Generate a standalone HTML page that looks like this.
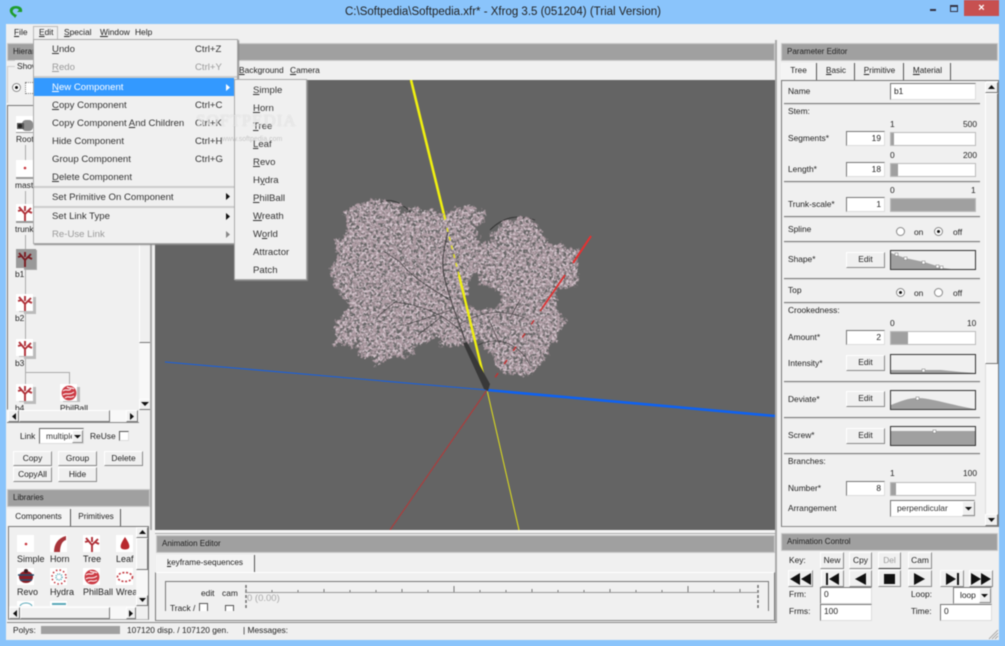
<!DOCTYPE html>
<html><head><meta charset="utf-8"><title>Xfrog</title>
<style>
html,body{margin:0;padding:0;background:#8ac4fb}
#r{position:relative;width:1005px;height:646px;overflow:hidden;background:#8ac4fb;font-family:"Liberation Sans",sans-serif;font-size:8.4px;color:#222;filter:blur(.4px)}
#r div,#r svg.a{position:absolute;box-sizing:border-box}
.t{white-space:nowrap;line-height:12px;height:12px}
.u{text-decoration:underline}
.tb{background:#a0a0a0;border:1px solid #ccc;line-height:16px;padding-left:5px;font-size:8px;color:#222}
.b{background:#f0f0f0;border:1px solid;border-color:#fff #8a8a8a #8a8a8a #fff;text-align:center;line-height:12px;font-size:8.4px}
.i{background:#fff;border:1px solid;border-color:#777 #ddd #ddd #777;line-height:12px;padding:0 3px;font-size:8.4px}
.s{background:#fff;border:1px solid #bbb}
.f{background:#a0a0a0;top:0;left:0;bottom:0}
.g{background:#f0f0f0;border:1px solid #333;overflow:hidden}
.sep{left:784px;width:196px;background:#777;border-bottom:1px solid #ddd;height:2px}
.m{font-size:9.6px;color:#333;margin-top:1px}
.dis{color:#9a9a9a}
.rad{width:9px;height:9px;border-radius:50%;background:#fff;border:1px solid #888}
.rad.on::after{content:"";position:absolute;left:2px;top:2px;width:3px;height:3px;border-radius:50%;background:#111}
.sb{background:#f0f0f0;border:1px solid;border-color:#fff #777 #777 #fff}
.tab{background:#f0f0f0;border-right:1px solid #555;text-align:center;line-height:15px;font-size:8.2px}
.ic{background:#fff;width:17px;height:17px}
.sh{box-shadow:3px 3px 0 #bbb}
</style></head><body>
<div id="r">
<svg width="0" height="0" style="position:absolute">
<defs>
<symbol id="tree" viewBox="0 0 18 18"><path d="M9 17V9M9 10L3 3M9 10L15 4M6 6L2 7M12 7L16 9M9 7V2" fill="none" stroke="#b03038" stroke-width="1.9"/></symbol>
<symbol id="tree2" viewBox="0 0 18 18"><path d="M9 17V9M9 10L3 3M9 10L15 4M6 6L2 7M12 7L16 9M9 7V2" fill="none" stroke="#7a1c22" stroke-width="1.9"/></symbol>
<symbol id="dot" viewBox="0 0 18 18"><circle cx="9" cy="9" r="1.3" fill="#c8323a"/></symbol>
<symbol id="horn" viewBox="0 0 18 18"><path d="M4 17C4 9 8 3 16 1L16 5C12 6 10 11 10 17Z" fill="#a8343a"/></symbol>
<symbol id="leaf" viewBox="0 0 18 18"><path d="M9 2C5 8 4 11 5 13C6 15 12 15 13 13C14 11 13 8 9 2Z" fill="#b8282e"/></symbol>
<symbol id="revo" viewBox="0 0 18 18"><ellipse cx="9" cy="9" rx="7" ry="6" fill="#8c1e26"/><path d="M1 7H17M3 12H15" stroke="#255070" stroke-width="1.5"/><circle cx="9" cy="3" r="2" fill="#3a1a20"/></symbol>
<symbol id="hydra" viewBox="0 0 18 18"><circle cx="9" cy="9" r="7" fill="none" stroke="#c43a42" stroke-width="1.6" stroke-dasharray="1.5 2.2"/><circle cx="9" cy="9" r="3" fill="none" stroke="#5aa8b8" stroke-width="1.6" stroke-dasharray="1 1"/></symbol>
<symbol id="phil" viewBox="0 0 18 18"><circle cx="9" cy="9" r="7.4" fill="#cc3a44"/><path d="M3 7C6 4 8 8 11 5M3 11C6 8 9 12 14 8M5 14C8 11 10 15 14 12M7 3C9 5 12 3 14 5" fill="none" stroke="#fff" stroke-width="1"/></symbol>
<symbol id="wreath" viewBox="0 0 18 18"><ellipse cx="9" cy="9" rx="7.5" ry="4.5" fill="none" stroke="#c43a42" stroke-width="1.6" stroke-dasharray="2 1.7"/></symbol>
<filter id="pet" x="-12%" y="-12%" width="124%" height="124%" color-interpolation-filters="sRGB">
<feTurbulence type="fractalNoise" baseFrequency=".11" numOctaves="3" seed="7" result="d"/>
<feDisplacementMap in="SourceAlpha" in2="d" scale="22" xChannelSelector="R" yChannelSelector="G"/>
<feGaussianBlur stdDeviation="2.2" result="a"/>
<feTurbulence type="fractalNoise" baseFrequency=".3" numOctaves="2" seed="4"/>
<feColorMatrix values="0 0 0 0 0 0 0 0 0 0 0 0 0 0 0 1 0 0 0 0" result="n"/>
<feComposite in="a" in2="n" operator="arithmetic" k2=".5" k3=".5"/>
<feComponentTransfer result="m"><feFuncA type="linear" slope="10" intercept="-6.8"/></feComponentTransfer>
<feFlood flood-color="#aa979f"/>
<feComposite in2="m" operator="in"/>
<feGaussianBlur stdDeviation=".3"/>
</filter>
<filter id="pet2" x="-12%" y="-12%" width="124%" height="124%" color-interpolation-filters="sRGB">
<feTurbulence type="fractalNoise" baseFrequency=".11" numOctaves="3" seed="7" result="d"/>
<feDisplacementMap in="SourceAlpha" in2="d" scale="22" xChannelSelector="R" yChannelSelector="G"/>
<feGaussianBlur stdDeviation="2.2" result="a"/>
<feTurbulence type="fractalNoise" baseFrequency=".42" numOctaves="2" seed="21"/>
<feColorMatrix values="0 0 0 0 0 0 0 0 0 0 0 0 0 0 0 1 0 0 0 0" result="n"/>
<feComposite in="a" in2="n" operator="arithmetic" k2=".5" k3=".5"/>
<feComponentTransfer result="m"><feFuncA type="linear" slope="10" intercept="-7.35"/></feComponentTransfer>
<feFlood flood-color="#d2c4cc"/>
<feComposite in2="m" operator="in"/>
<feGaussianBlur stdDeviation=".3"/>
</filter>
</defs></svg>

<!-- title bar -->
<svg class="a" style="left:8px;top:5px" width="16" height="14" viewBox="0 0 16 14"><path d="M8 1C3 1 1 4 2 7C3 10 6 11 7 13L9 10C6 9 4 7 5 5C6 3 10 3 11 5L9 7L14 7C15 3 12 1 8 1Z" fill="#1f9d2d"/></svg>
<div class="t" style="left:345px;top:5px;font-size:11.5px;line-height:14px;height:14px;color:#222">C:\Softpedia\Softpedia.xfr* - Xfrog 3.5 (051204) (Trial Version)</div>
<div style="left:930px;top:9px;width:6px;height:2px;background:#334"></div>
<div style="left:950px;top:5px;width:8px;height:7px;border:1px solid #334;border-top-width:2px"></div>
<div style="left:964px;top:0;width:35px;height:16px;background:#c75050;color:#fff;text-align:center;font-size:11px;line-height:16px;font-weight:bold">×</div>

<!-- client -->
<div style="left:6px;top:24px;width:993px;height:616px;background:#f0f0f0"></div>

<!-- menu bar -->
<div class="t" style="left:14px;top:26px"><span class="u">F</span>ile</div>
<div class="t" style="left:39px;top:26px"><span class="u">E</span>dit</div>
<div class="t" style="left:64px;top:26px"><span class="u">S</span>pecial</div>
<div class="t" style="left:100px;top:26px"><span class="u">W</span>indow</div>
<div class="t" style="left:135px;top:26px">Help</div>
<div style="left:33px;top:26px;width:25px;height:14px;border:1px solid #bbb;border-bottom:0"></div>

<!-- left panel -->
<div class="tb" style="left:7px;top:43px;width:143px;height:18px">Hierarchy</div>
<div style="left:7px;top:66px;width:143px;height:37px;border:1px solid #ccc;border-bottom:0"></div>
<div class="t" style="left:15px;top:60px;background:#f0f0f0;padding:0 2px">Show</div>
<div class="rad on" style="left:12px;top:83px"></div>
<div style="left:25px;top:82px;width:12px;height:12px;border:1px dotted #777;background:#fff"></div>
<div style="left:7px;top:105px;width:132px;height:305px;background:#f0f0f0;border:1px solid;border-color:#777 #f0f0f0 #f0f0f0 #777"></div>

<div style="left:25px;top:135px;width:1px;height:260px;background:#aaa"></div>
<div style="left:25px;top:372px;width:45px;height:1px;background:#aaa"></div>
<div style="left:69px;top:372px;width:1px;height:12px;background:#aaa"></div>

<div class="ic" style="left:16px;top:116px"></div>
<svg class="a" style="left:16px;top:116px" width="18" height="18" viewBox="0 0 18 18"><rect x="6" y="4" width="11" height="11" rx="4" fill="#8c8c8c"/><rect x="1" y="7" width="7" height="6" fill="#555"/><circle cx="4" cy="10" r="2" fill="#222"/></svg>
<div style="left:16px;top:132px;width:18px;height:2px;background:#999"></div>
<div class="t" style="left:16px;top:133px;background:#f0f0f0">Root</div>

<div class="ic" style="left:16px;top:160px"></div><svg class="a" style="left:16px;top:159px" width="18" height="18"><use href="#dot"/></svg>
<div style="left:16px;top:177px;width:18px;height:2px;background:#999"></div>
<div class="t" style="left:15px;top:179px;background:#f0f0f0">mast</div>

<div class="ic" style="left:16px;top:204px"></div><svg class="a" style="left:16px;top:204px" width="18" height="18"><use href="#tree"/></svg>
<div style="left:16px;top:221px;width:18px;height:2px;background:#999"></div>
<div class="t" style="left:15px;top:223px;background:#f0f0f0">trunk</div>

<div style="left:16px;top:249px;width:20px;height:20px;background:#999;box-shadow:1px 1px 0 #aaa"></div><svg class="a" style="left:16px;top:250px" width="18" height="18"><use href="#tree2"/></svg>
<div class="t" style="left:15px;top:268px;background:#f0f0f0">b1</div>

<div class="ic sh" style="left:16px;top:294px"></div><svg class="a" style="left:16px;top:294px" width="18" height="18"><use href="#tree"/></svg>
<div class="t" style="left:15px;top:312px;background:#f0f0f0">b2</div>

<div class="ic sh" style="left:16px;top:339px"></div><svg class="a" style="left:16px;top:339px" width="18" height="18"><use href="#tree"/></svg>
<div class="t" style="left:15px;top:357px;background:#f0f0f0">b3</div>

<div class="ic sh" style="left:16px;top:384px"></div><svg class="a" style="left:16px;top:384px" width="18" height="18"><use href="#tree"/></svg>
<div class="ic sh" style="left:60px;top:384px"></div><svg class="a" style="left:60px;top:384px" width="18" height="18"><use href="#phil"/></svg>
<div class="t" style="left:15px;top:402px;background:#f0f0f0">b4</div>
<div class="t" style="left:60px;top:402px;background:#f0f0f0">PhilBall</div>

<!-- hierarchy scrollbars -->
<div style="left:139px;top:105px;width:12px;height:305px;background:#f8f8f8"></div>
<div class="sb" style="left:139px;top:105px;width:12px;height:238px"></div>
<div class="sb" style="left:139px;top:399px;width:12px;height:11px"></div>
<svg class="a" style="left:141px;top:402px" width="8" height="5"><path d="M0 0H8L4 4Z" fill="#111"/></svg>
<div style="left:7px;top:410px;width:132px;height:13px;background:#f8f8f8;border-bottom:1px solid #888"></div>
<div class="sb" style="left:8px;top:410px;width:11px;height:12px"></div>
<svg class="a" style="left:11px;top:413px" width="5" height="8"><path d="M5 0V7L1 3.5Z" fill="#111"/></svg>
<div class="sb" style="left:19px;top:410px;width:91px;height:12px"></div>
<div class="sb" style="left:126px;top:410px;width:12px;height:12px"></div>
<svg class="a" style="left:130px;top:413px" width="5" height="8"><path d="M0 0V7L4 3.5Z" fill="#111"/></svg>

<div class="t" style="left:20px;top:430px">Link</div>
<div class="i" style="left:39px;top:428px;width:45px;height:16px;padding-left:6px;line-height:14px;color:#333;border-color:#666 #ddd #ddd #666;overflow:hidden">multiple</div>
<div class="b" style="left:72px;top:430px;width:11px;height:13px"></div>
<svg class="a" style="left:74px;top:435px" width="8" height="5"><path d="M0 0H7L3.5 3.5Z" fill="#111"/></svg>
<div class="t" style="left:90px;top:430px">ReUse</div>
<div style="left:119px;top:431px;width:10px;height:10px;background:#fff;border:1px solid;border-color:#555 #ddd #ddd #555"></div>

<div class="b" style="left:13px;top:451px;width:39px;height:15px">Copy</div>
<div class="b" style="left:58px;top:451px;width:39px;height:15px">Group</div>
<div class="b" style="left:104px;top:451px;width:39px;height:15px">Delete</div>
<div class="b" style="left:13px;top:467px;width:39px;height:15px">CopyAll</div>
<div class="b" style="left:58px;top:467px;width:39px;height:15px">Hide</div>

<div class="tb" style="left:7px;top:489px;width:143px;height:18px">Libraries</div>
<div class="tab" style="left:7px;top:509px;width:64px;height:17px;background:#f4f4f4">Components</div>
<div class="tab" style="left:72px;top:509px;width:49px;height:17px">Primitives</div>
<div style="left:8px;top:526px;width:141px;height:94px;border:1px solid;border-color:#777 #777 #bbb #777"></div>
<div style="left:9px;top:527px;width:127px;height:79px;background:#f0f0f0;overflow:hidden">
 <div class="ic" style="left:8px;top:8px"></div><svg class="a" style="left:8px;top:8px" width="18" height="18"><use href="#dot"/></svg>
 <div class="ic" style="left:41px;top:8px"></div><svg class="a" style="left:41px;top:8px" width="18" height="18"><use href="#horn"/></svg>
 <div class="ic" style="left:74px;top:8px"></div><svg class="a" style="left:74px;top:8px" width="18" height="18"><use href="#tree"/></svg>
 <div class="ic" style="left:107px;top:8px"></div><svg class="a" style="left:107px;top:8px" width="18" height="18"><use href="#leaf"/></svg>
 <div class="ic" style="left:8px;top:41px"></div><svg class="a" style="left:8px;top:41px" width="18" height="18"><use href="#revo"/></svg>
 <div class="ic" style="left:41px;top:41px"></div><svg class="a" style="left:41px;top:41px" width="18" height="18"><use href="#hydra"/></svg>
 <div class="ic" style="left:74px;top:41px"></div><svg class="a" style="left:74px;top:41px" width="18" height="18"><use href="#phil"/></svg>
 <div class="ic" style="left:107px;top:41px"></div><svg class="a" style="left:107px;top:41px" width="18" height="18"><use href="#wreath"/></svg>
 <div class="t" style="left:8px;top:26px;font-size:9px">Simple</div>
 <div class="t" style="left:41px;top:26px;font-size:9px">Horn</div>
 <div class="t" style="left:74px;top:26px;font-size:9px">Tree</div>
 <div class="t" style="left:107px;top:26px;font-size:9px">Leaf</div>
 <div class="t" style="left:8px;top:59px;font-size:9px">Revo</div>
 <div class="t" style="left:41px;top:59px;font-size:9px">Hydra</div>
 <div class="t" style="left:74px;top:59px;font-size:9px">PhilBall</div>
 <div class="t" style="left:107px;top:59px;font-size:9px">Wrea</div>
 <div class="ic" style="left:8px;top:74px;height:5px"></div>
 <div class="ic" style="left:41px;top:74px;height:5px"></div>
 <svg class="a" style="left:8px;top:74px" width="18" height="5"><path d="M3 5C5 1 13 1 15 5" fill="none" stroke="#5aa8b8"/></svg>
 <svg class="a" style="left:41px;top:74px" width="18" height="5"><path d="M2 3H16" stroke="#5aa8b8" stroke-width="2"/></svg>
</div>
<div style="left:136px;top:527px;width:12px;height:79px;background:#f8f8f8"></div>
<div class="sb" style="left:136px;top:527px;width:12px;height:11px"></div>
<svg class="a" style="left:139px;top:530px" width="8" height="5"><path d="M0 4H7L3.5 0Z" fill="#111"/></svg>
<div class="sb" style="left:136px;top:538px;width:12px;height:32px"></div>
<div class="sb" style="left:136px;top:595px;width:12px;height:11px"></div>
<svg class="a" style="left:139px;top:598px" width="8" height="5"><path d="M0 0H7L3.5 4Z" fill="#111"/></svg>
<div style="left:9px;top:606px;width:127px;height:14px;background:#f8f8f8;border-bottom:1px solid #aaa"></div>
<div class="sb" style="left:9px;top:607px;width:11px;height:12px"></div>
<svg class="a" style="left:12px;top:610px" width="5" height="8"><path d="M5 0V7L1 3.5Z" fill="#111"/></svg>
<div class="sb" style="left:20px;top:607px;width:90px;height:12px"></div>
<div class="sb" style="left:126px;top:607px;width:10px;height:12px"></div>
<svg class="a" style="left:129px;top:610px" width="5" height="8"><path d="M0 0V7L4 3.5Z" fill="#111"/></svg>

<!-- center top -->
<div class="tb" style="left:155px;top:43px;width:620px;height:18px"></div>
<div class="t" style="left:239px;top:64px;font-size:8.4px"><span class="u">B</span>ackground</div>
<div class="t" style="left:290px;top:64px;font-size:8.4px"><span class="u">C</span>amera</div>
<div style="left:150px;top:106px;width:2px;height:424px;background:#aaa"></div>

<!-- viewport -->
<svg class="a" style="left:155px;top:80px" width="620" height="450" viewBox="155 80 620 450">
<rect x="155" y="80" width="620" height="450" fill="#646464"/>
<path d="M487 390L519 530" stroke="#d8d820" stroke-width="1.1"/>
<path d="M487 390L390 530" stroke="#b03a3a" stroke-width="1.1"/>
<path d="M165 362L487 390" stroke="#1860e0" stroke-width="1.1"/>
<path d="M487 390L775 416" stroke="#0f62f0" stroke-width="2.6"/>
<path d="M411 80L446 223" stroke="#f0f010" stroke-width="2.6"/>
<path d="M380 203C392 196 405 205 415 217M490 230C505 215 520 215 535 220" fill="none" stroke="#333" stroke-width=".9"/>
<path fill-rule="evenodd" fill="#000" filter="url(#pet)" d="M345 208L380 194L407 206L447 208L464 199L494 212L478 232L486 238L500 218L530 212L550 238L582 248L580 288L560 292L558 310L570 318L558 338L545 364L528 382L500 378L492 358L476 342L445 352L435 342L415 352L382 366L360 362L356 346L332 350L329 322L345 308L340 297L328 278L332 245L342 228Z M472 282L494 291L498 306L474 305L466 298Z"/>
<path fill-rule="evenodd" fill="#000" filter="url(#pet2)" d="M345 208L380 194L407 206L447 208L464 199L494 212L478 232L486 238L500 218L530 212L550 238L582 248L580 288L560 292L558 310L570 318L558 338L545 364L528 382L500 378L492 358L476 342L445 352L435 342L415 352L382 366L360 362L356 346L332 350L329 322L345 308L340 297L328 278L332 245L342 228Z M472 282L494 291L498 306L474 305L466 298Z"/>
<g fill="none" stroke="#2c2c2c" opacity=".7">
<path d="M465 340C458 320 450 300 445 280C440 260 445 245 448 232" stroke-width="1.3"/>
<path d="M460 330C440 312 420 305 395 302M450 300C425 285 410 275 400 262M458 325C480 312 500 308 525 318M478 345C500 335 520 345 530 365M440 318L418 335M452 310L405 325M490 322L500 345M510 318L520 300M395 302L378 316M400 262L385 252" stroke-width=".8"/>
</g>
<path d="M447 228L459 275" stroke="#e8e820" stroke-width="1.4" stroke-dasharray="4 5"/>
<path d="M459 275L484 378" stroke="#f0f010" stroke-width="2.4"/>
<path d="M591 236L573 263" stroke="#e83030" stroke-width="2"/>
<path d="M565 275L543 307" stroke="#e03030" stroke-width="1.7"/>
<path d="M543 307L492 382" stroke="#c83030" stroke-width="1.4" stroke-dasharray="5 11"/>
<path d="M463 343L467 342L490 384L488 391L484 389Z" fill="#383838"/>
</svg>

<!-- animation editor -->
<div style="left:155px;top:530px;width:620px;height:4px;background:#f4f4f4;border-bottom:1px solid #aaa"></div>
<div class="tb" style="left:156px;top:535px;width:619px;height:18px">Animation Editor</div>
<div class="tab" style="left:156px;top:555px;width:99px;height:17px;line-height:15px;background:#f4f4f4"><span class="u">k</span>eyframe-sequences</div>
<div style="left:155px;top:572px;width:620px;height:49px;border-left:1px solid #777;border-right:1px solid #777;border-bottom:1px solid #888;border-top:1px solid #fff"></div>
<div style="left:165px;top:581px;width:604px;height:30px;border:1px solid #777;border-bottom:0"></div>
<div class="t" style="left:201px;top:587px">edit</div>
<div class="t" style="left:222px;top:587px">cam</div>
<div class="t" style="left:170px;top:602px">Track /</div>
<div style="left:199px;top:603px;width:9px;height:8px;border:1px solid #555;border-bottom:0;background:#fff"></div>
<div style="left:225px;top:605px;width:9px;height:6px;border:1px solid #555;border-bottom:0;background:#fff"></div>
<svg class="a" style="left:245px;top:584px" width="516" height="26"><path d="M1 1V25M513 1V25" stroke="#666" stroke-dasharray="3 2" stroke-width="1.4"/><path d="M1 8.5H513" stroke="#999"/><path d="M1 8V5M27 8V6M53 8V6M79 8V5M105 8V6M131 8V6M157 8V5M183 8V6M209 8V2M235 8V6M261 8V6M287 8V5M313 8V6M339 8V6M365 8V5M391 8V6M417 8V6M443 8V2M469 8V6M495 8V5" stroke="#777"/></svg>
<div class="t" style="left:247px;top:593px;color:#aaa;font-size:9.5px">0 (0.00)</div>

<!-- parameter editor -->
<div style="left:775px;top:40px;width:5px;height:583px;background:#f0f0f0;border-left:2px solid #aaa"></div>
<div class="tb" style="left:781px;top:43px;width:217px;height:18px">Parameter Editor</div>
<div class="tab" style="left:781px;top:63px;width:36px;height:17px;background:#f4f4f4">Tree</div>
<div class="tab" style="left:818px;top:63px;width:37px;height:17px"><span class="u">B</span>asic</div>
<div class="tab" style="left:856px;top:63px;width:48px;height:17px"><span class="u">P</span>rimitive</div>
<div class="tab" style="left:905px;top:63px;width:46px;height:17px"><span class="u">M</span>aterial</div>
<div style="left:781px;top:80px;width:218px;height:447px;border:1px solid;border-color:#777 #777 #888 #777"></div>

<div class="t" style="left:788px;top:85px">Name</div>
<div class="i" style="left:890px;top:83px;width:86px;height:17px;line-height:14px">b1</div>
<div class="sep" style="top:103px"></div>
<div class="t" style="left:788px;top:105px">Stem:</div>
<div class="t" style="left:890px;top:118px">1</div><div class="t" style="left:963px;top:118px">500</div>
<div class="t" style="left:788px;top:132px">Segments*</div>
<div class="i" style="left:846px;top:131px;width:39px;height:15px;text-align:right">19</div>
<div class="s" style="left:890px;top:132px;width:86px;height:14px"><div class="f" style="width:3px"></div></div>
<div class="t" style="left:890px;top:149px">0</div><div class="t" style="left:963px;top:149px">200</div>
<div class="t" style="left:788px;top:163px">Length*</div>
<div class="i" style="left:846px;top:162px;width:39px;height:15px;text-align:right">18</div>
<div class="s" style="left:890px;top:163px;width:86px;height:14px"><div class="f" style="width:7px"></div></div>
<div class="sep" style="top:181px"></div>
<div class="t" style="left:890px;top:184px">0</div><div class="t" style="left:971px;top:184px">1</div>
<div class="t" style="left:788px;top:198px">Trunk-scale*</div>
<div class="i" style="left:846px;top:197px;width:39px;height:15px;text-align:right">1</div>
<div class="s" style="left:890px;top:198px;width:86px;height:14px;background:#a0a0a0"></div>
<div class="sep" style="top:216px"></div>
<div class="t" style="left:788px;top:223px">Spline</div>
<div class="rad" style="left:896px;top:227px"></div><div class="t" style="left:914px;top:226px">on</div>
<div class="rad on" style="left:934px;top:227px"></div><div class="t" style="left:953px;top:226px">off</div>
<div class="sep" style="top:241px"></div>
<div class="t" style="left:788px;top:253px">Shape*</div>
<div class="b" style="left:846px;top:252px;width:39px;height:16px">Edit</div>
<div class="g" style="left:890px;top:250px;width:86px;height:20px"><svg class="a" style="left:0;top:0" width="84" height="18"><path d="M0 18V2L14 7L33 11L46 15L52 17L60 18Z" fill="#a0a0a0"/><g fill="#fff" stroke="#888" stroke-width=".6"><rect x="4" y="2" width="3" height="3"/><rect x="13" y="6" width="3" height="3"/><rect x="31" y="10" width="3" height="3"/><rect x="45" y="14" width="3" height="3"/><rect x="49" y="15" width="3" height="3"/></g></svg></div>
<div class="sep" style="top:278px"></div>
<div class="t" style="left:788px;top:284px">Top</div>
<div class="rad on" style="left:896px;top:288px"></div><div class="t" style="left:914px;top:287px">on</div>
<div class="rad" style="left:934px;top:288px"></div><div class="t" style="left:953px;top:287px">off</div>
<div class="sep" style="top:302px"></div>
<div class="t" style="left:788px;top:304px">Crookedness:</div>
<div class="t" style="left:890px;top:317px">0</div><div class="t" style="left:967px;top:317px">10</div>
<div class="t" style="left:788px;top:331px">Amount*</div>
<div class="i" style="left:846px;top:330px;width:39px;height:15px;text-align:right">2</div>
<div class="s" style="left:890px;top:331px;width:86px;height:14px"><div class="f" style="width:17px"></div></div>
<div class="t" style="left:788px;top:357px">Intensity*</div>
<div class="b" style="left:846px;top:355px;width:39px;height:16px">Edit</div>
<div class="g" style="left:890px;top:354px;width:86px;height:20px"><svg class="a" style="left:0;top:0" width="84" height="18"><path d="M0 18V15H50L70 17L84 18Z" fill="#a0a0a0"/><rect x="31" y="14" width="3" height="3" fill="#fff" stroke="#888" stroke-width=".6"/></svg></div>
<div class="sep" style="top:381px"></div>
<div class="t" style="left:788px;top:393px">Deviate*</div>
<div class="b" style="left:846px;top:391px;width:39px;height:16px">Edit</div>
<div class="g" style="left:890px;top:390px;width:86px;height:20px"><svg class="a" style="left:0;top:0" width="84" height="18"><path d="M0 18V14C10 10 18 7 26 7C40 7 60 14 84 18Z" fill="#a0a0a0"/><rect x="25" y="6" width="3" height="3" fill="#fff" stroke="#888" stroke-width=".6"/></svg></div>
<div class="sep" style="top:417px"></div>
<div class="t" style="left:788px;top:429px">Screw*</div>
<div class="b" style="left:846px;top:428px;width:39px;height:16px">Edit</div>
<div class="g" style="left:890px;top:426px;width:86px;height:20px"><svg class="a" style="left:0;top:0" width="84" height="18"><rect y="4" width="84" height="14" fill="#a0a0a0"/><rect x="42" y="3" width="3" height="3" fill="#fff" stroke="#888" stroke-width=".6"/></svg></div>
<div class="sep" style="top:453px"></div>
<div class="t" style="left:788px;top:455px">Branches:</div>
<div class="t" style="left:890px;top:467px">1</div><div class="t" style="left:963px;top:467px">100</div>
<div class="t" style="left:788px;top:482px">Number*</div>
<div class="i" style="left:846px;top:481px;width:39px;height:15px;text-align:right">8</div>
<div class="s" style="left:890px;top:482px;width:86px;height:14px"><div class="f" style="width:5px"></div></div>
<div class="t" style="left:788px;top:502px">Arrangement</div>
<div class="i" style="left:890px;top:500px;width:85px;height:17px;line-height:14px;padding-left:6px;color:#333">perpendicular</div>
<div class="b" style="left:962px;top:501px;width:13px;height:15px"></div>
<svg class="a" style="left:965px;top:507px" width="8" height="5"><path d="M0 0H7L3.5 3.5Z" fill="#111"/></svg>
<div style="left:985px;top:81px;width:13px;height:445px;background:#f8f8f8;border-left:1px solid #ddd"></div>
<div class="sb" style="left:985px;top:82px;width:13px;height:11px"></div>
<svg class="a" style="left:988px;top:85px" width="8" height="5"><path d="M0 4H7L3.5 0Z" fill="#111"/></svg>
<div class="sb" style="left:985px;top:93px;width:13px;height:271px"></div>
<div class="sb" style="left:985px;top:514px;width:13px;height:12px"></div>
<svg class="a" style="left:988px;top:518px" width="8" height="5"><path d="M0 0H7L3.5 4Z" fill="#111"/></svg>

<!-- animation control -->
<div class="tb" style="left:781px;top:533px;width:217px;height:18px">Animation Control</div>
<div class="t" style="left:789px;top:554px">Key:</div>
<div class="b" style="left:820px;top:552px;width:24px;height:17px;line-height:15px">New</div>
<div class="b" style="left:849px;top:552px;width:23px;height:17px;line-height:15px">Cpy</div>
<div class="b dis" style="left:878px;top:552px;width:23px;height:17px;line-height:15px;border-bottom-color:#333">Del</div>
<div class="b" style="left:908px;top:552px;width:24px;height:17px;line-height:15px">Cam</div>
<div class="b" style="left:788px;top:570px;width:25px;height:17px"></div>
<div class="b" style="left:821px;top:570px;width:23px;height:17px"></div>
<div class="b" style="left:849px;top:570px;width:23px;height:17px"></div>
<div class="b" style="left:878px;top:570px;width:23px;height:17px"></div>
<div class="b" style="left:908px;top:570px;width:24px;height:17px"></div>
<div class="b" style="left:940px;top:570px;width:24px;height:17px"></div>
<div class="b" style="left:969px;top:570px;width:24px;height:17px"></div>
<svg class="a" style="left:788px;top:570px" width="206" height="17" viewBox="788 570 206 17"><g fill="#111">
<path d="M800 573V585L790 579ZM811 573V585L801 579Z"/>
<path d="M826 573H828V585H826ZM839 573V585L829 579Z"/>
<path d="M866 573V585L855 579Z"/>
<rect x="884" y="574" width="11" height="10"/>
<path d="M914 573V585L925 579Z"/>
<path d="M946 573V585L956 579ZM957 573H959V585H957Z"/>
<path d="M971 573V585L981 579ZM981 573V585L991 579Z"/></g></svg>
<div class="t" style="left:789px;top:588px">Frm:</div>
<div class="i" style="left:820px;top:587px;width:52px;height:17px;line-height:13px">0</div>
<div class="t" style="left:911px;top:588px">Loop:</div>
<div class="i" style="left:953px;top:587px;width:39px;height:17px;line-height:14px;padding-left:6px">loop</div>
<div class="b" style="left:979px;top:588px;width:12px;height:15px"></div>
<svg class="a" style="left:981px;top:594px" width="8" height="5"><path d="M0 0H7L3.5 3.5Z" fill="#111"/></svg>
<div class="t" style="left:789px;top:605px">Frms:</div>
<div class="i" style="left:820px;top:604px;width:52px;height:17px;line-height:13px">100</div>
<div class="t" style="left:911px;top:605px">Time:</div>
<div class="i" style="left:940px;top:604px;width:52px;height:17px;line-height:13px">0</div>

<!-- status bar -->
<div style="left:7px;top:622px;width:770px;height:1px;background:#888"></div>
<div class="t" style="left:13px;top:624px">Polys:</div>
<div style="left:41px;top:626px;width:79px;height:8px;background:#a0a0a0"></div>
<div class="t" style="left:127px;top:624px">107120 disp. / 107120 gen.</div>
<div class="t" style="left:243px;top:624px">| Messages:</div>
<svg class="a" style="left:988px;top:629px" width="11" height="11"><path d="M1 10L10 1M4 10L10 4M7 10L10 7" stroke="#aaa"/></svg>

<!-- menu -->
<div style="left:33px;top:39px;width:205px;height:205px;background:#f0f0f0;border:1px solid #aaa;box-shadow:1px 1px 1px #888"></div>
<div style="left:34px;top:78px;width:200px;height:18px;background:#3399ff"></div>
<div style="left:34px;top:76px;width:203px;height:2px;background:#ccc"></div>
<div style="left:34px;top:186px;width:200px;height:2px;background:#ccc"></div>
<div style="left:34px;top:206px;width:200px;height:2px;background:#ccc"></div>
<div class="t m" style="left:52px;top:43px"><span class="u">U</span>ndo</div><div class="t m" style="left:195px;top:43px">Ctrl+Z</div>
<div class="t m dis" style="left:52px;top:61px"><span class="u">R</span>edo</div><div class="t m dis" style="left:195px;top:61px">Ctrl+Y</div>
<div class="t m" style="left:52px;top:81px;color:#fff"><span class="u">N</span>ew Component</div>
<svg class="a" style="left:226px;top:84px" width="5" height="7"><path d="M0 0V7L4 3.5Z" fill="#fff"/></svg>
<div class="t m" style="left:52px;top:99px"><span class="u">C</span>opy Component</div><div class="t m" style="left:195px;top:99px">Ctrl+C</div>
<div class="t m" style="left:52px;top:117px">Copy Component <span class="u">A</span>nd Children</div><div class="t m" style="left:195px;top:117px">Ctrl+K</div>
<div class="t m" style="left:52px;top:135px">Hide Component</div><div class="t m" style="left:195px;top:135px">Ctrl+H</div>
<div class="t m" style="left:52px;top:153px">Group Component</div><div class="t m" style="left:195px;top:153px">Ctrl+G</div>
<div class="t m" style="left:52px;top:171px"><span class="u">D</span>elete Component</div>
<div class="t m" style="left:52px;top:191px">Set Primitive On Component</div>
<svg class="a" style="left:226px;top:193px" width="5" height="7"><path d="M0 0V7L4 3.5Z" fill="#111"/></svg>
<div class="t m" style="left:52px;top:210px">Set Link Type</div>
<svg class="a" style="left:226px;top:213px" width="5" height="7"><path d="M0 0V7L4 3.5Z" fill="#111"/></svg>
<div class="t m dis" style="left:52px;top:228px">Re-Use Link</div>
<svg class="a" style="left:226px;top:231px" width="5" height="7"><path d="M0 0V7L4 3.5Z" fill="#888"/></svg>

<!-- submenu -->
<div style="left:234px;top:79px;width:73px;height:201px;background:#f0f0f0;border:1px solid #aaa;box-shadow:1px 1px 1px #888"></div>
<div class="t m" style="left:253px;top:84px"><span class="u">S</span>imple</div>
<div class="t m" style="left:253px;top:102px"><span class="u">H</span>orn</div>
<div class="t m" style="left:253px;top:120px"><span class="u">T</span>ree</div>
<div class="t m" style="left:253px;top:138px"><span class="u">L</span>eaf</div>
<div class="t m" style="left:253px;top:156px"><span class="u">R</span>evo</div>
<div class="t m" style="left:253px;top:174px">H<span class="u">y</span>dra</div>
<div class="t m" style="left:253px;top:192px"><span class="u">P</span>hilBall</div>
<div class="t m" style="left:253px;top:210px"><span class="u">W</span>reath</div>
<div class="t m" style="left:253px;top:228px">W<span class="u">o</span>rld</div>
<div class="t m" style="left:253px;top:246px">Attractor</div>
<div class="t m" style="left:253px;top:264px">Patch</div>

<!-- watermark -->
<div class="t" style="left:196px;top:112px;font-family:'Liberation Serif',serif;font-size:17px;line-height:18px;height:18px;letter-spacing:1px;color:rgba(255,255,255,.55);text-shadow:0 0 1px rgba(160,160,160,.5)">SOFTPEDIA</div>
<div class="t" style="left:222px;top:134px;font-size:7px;color:rgba(170,170,170,.6)">www.softpedia.com</div>
</div>
</body></html>
